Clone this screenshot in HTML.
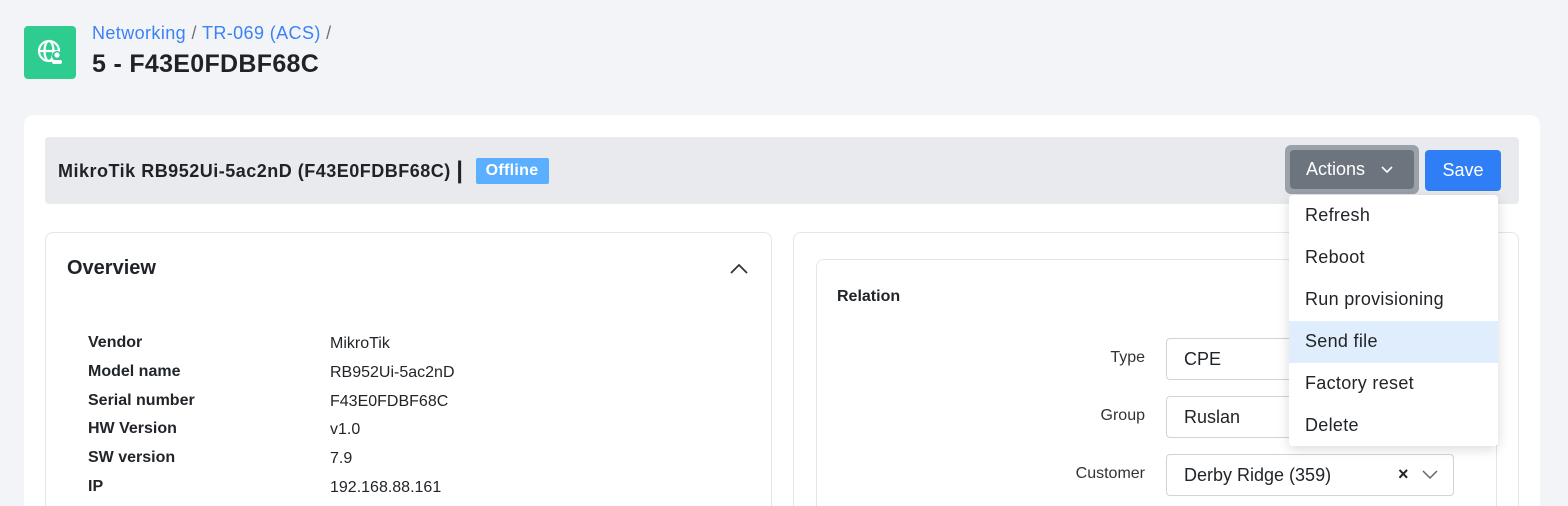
<!DOCTYPE html>
<html><head><meta charset="utf-8"><style>
*{box-sizing:border-box;margin:0;padding:0}
html,body{width:1568px;height:506px;overflow:hidden}
body{background:#f3f4f7;font-family:"Liberation Sans",sans-serif;color:#212529;position:relative}
.abs{position:absolute}
.icon{left:24px;top:26px;width:52px;height:53px;background:#2ecc8f;border-radius:4px}
.bc{left:92px;top:23px;font-size:18px;letter-spacing:0.4px;color:#6c757d}
.bc a{color:#3b82f6;text-decoration:none}
h1{position:absolute;left:92px;top:50px;font-size:25px;font-weight:bold;letter-spacing:0.3px;color:#1f2328}
.main{left:24px;top:115px;width:1516px;height:391px;background:#fff;border-radius:10px 10px 0 0}
.hbar{left:45px;top:137px;width:1474px;height:67px;background:#e9eaee;border-radius:4px}
.title{left:58px;top:157px;font-size:18px;font-weight:bold;letter-spacing:0.5px;color:#1f2328;display:flex;align-items:center;white-space:nowrap}
.badge{display:inline-block;margin-left:12px;width:73px;height:26px;background:#5ab0ff;color:#fff;font-size:16px;font-weight:bold;text-align:center;line-height:26px;border-radius:2px;letter-spacing:0.3px}
.actwrap{left:1285px;top:145px;width:134px;height:49px;background:#9ba1a8;border-radius:6px}
.act{left:1290px;top:150px;width:124px;height:39px;background:#6c757d;border-radius:4px;color:#fff;font-size:18px;line-height:39px;padding-left:16px}
.save{left:1425px;top:150px;width:76px;height:41px;background:#2f7ef6;border-radius:4px;color:#fff;font-size:18px;line-height:41px;text-align:center}
.card{background:#fff;border:1px solid #e3e5e8;border-bottom:none;border-radius:8px 8px 0 0}
.menu{left:1289px;top:195px;width:209px;height:251px;background:#fff;border-radius:4px;box-shadow:0 3px 12px rgba(0,0,0,.15)}
.menu div{height:42px;line-height:40px;padding-left:16px;font-size:18px;letter-spacing:0.3px;color:#212529}
.menu .hl{background:#e0edfd}
.lbl{font-size:16px;font-weight:bold;color:#212529}
.val{font-size:16px;color:#212529}
.inp{background:#fff;border:1px solid #ced4da;border-radius:4px;height:42px;font-size:18px;line-height:40px;padding-left:17px}
.rl{font-size:16px;color:#333;text-align:right;width:100px}
</style></head><body>
<div class="abs icon"><svg width="52" height="53" viewBox="0 0 52 53"><g fill="none" stroke="#fff" stroke-width="2.2"><circle cx="25" cy="25" r="10"/><ellipse cx="25" cy="25" rx="4.5" ry="10"/><line x1="15" y1="25" x2="35" y2="25"/></g><circle cx="33" cy="30" r="5" fill="#2ecc8f"/><circle cx="33" cy="29" r="2.6" fill="#fff"/><rect x="28" y="34" width="10" height="4" rx="2" fill="#fff"/></svg></div>
<div class="abs bc"><a>Networking</a> / <a>TR-069 (ACS)</a> /</div>
<h1>5 - F43E0FDBF68C</h1>
<div class="abs main"></div>
<div class="abs hbar"></div>
<div class="abs title">MikroTik RB952Ui-5ac2nD (F43E0FDBF68C)&nbsp;<span style="font-size:24px;font-weight:bold">|</span><span class="badge">Offline</span></div>
<div class="abs actwrap"></div>
<div class="abs act">Actions <svg width="14" height="10" style="margin-left:10px" viewBox="0 0 14 10"><path d="M2 2l5 5 5-5" fill="none" stroke="#fff" stroke-width="1.6"/></svg></div>
<div class="abs save">Save</div>
<div class="abs card" style="left:45px;top:232px;width:727px;height:274px"></div>
<div class="abs" style="left:67px;top:257px;font-size:20px;font-weight:bold;color:#1f2328">Overview</div>
<svg class="abs" style="left:729px;top:262px" width="20" height="14" viewBox="0 0 20 14"><path d="M2 11l8-8 8 8" fill="none" stroke="#333" stroke-width="1.8"/></svg>
<div class="abs lbl" style="left:88px;top:334px">Vendor</div><div class="abs val" style="left:330px;top:335px">MikroTik</div>
<div class="abs lbl" style="left:88px;top:363px">Model name</div><div class="abs val" style="left:330px;top:364px">RB952Ui-5ac2nD</div>
<div class="abs lbl" style="left:88px;top:392px">Serial number</div><div class="abs val" style="left:330px;top:393px">F43E0FDBF68C</div>
<div class="abs lbl" style="left:88px;top:420px">HW Version</div><div class="abs val" style="left:330px;top:421px">v1.0</div>
<div class="abs lbl" style="left:88px;top:449px">SW version</div><div class="abs val" style="left:330px;top:450px">7.9</div>
<div class="abs lbl" style="left:88px;top:478px">IP</div><div class="abs val" style="left:330px;top:479px">192.168.88.161</div>
<div class="abs card" style="left:793px;top:232px;width:726px;height:274px"></div>
<div class="abs card" style="left:816px;top:259px;width:681px;height:247px"></div>
<div class="abs lbl" style="left:837px;top:288px">Relation</div>
<div class="abs rl" style="left:1045px;top:349px">Type</div>
<div class="abs inp" style="left:1166px;top:338px;width:290px">CPE</div>
<div class="abs rl" style="left:1045px;top:407px">Group</div>
<div class="abs inp" style="left:1166px;top:396px;width:290px">Ruslan</div>
<div class="abs rl" style="left:1045px;top:465px">Customer</div>
<div class="abs inp" style="left:1166px;top:454px;width:288px">Derby Ridge (359)</div>
<div class="abs" style="left:1398px;top:464px;font-size:18px;font-weight:bold">×</div>
<svg class="abs" style="left:1421px;top:468px" width="18" height="12" viewBox="0 0 18 12"><path d="M2 3l7 7 7-7" fill="none" stroke="#666" stroke-width="1.5"/></svg>
<div class="abs menu"><div>Refresh</div><div>Reboot</div><div>Run provisioning</div><div class="hl">Send file</div><div>Factory reset</div><div>Delete</div></div>
</body></html>
